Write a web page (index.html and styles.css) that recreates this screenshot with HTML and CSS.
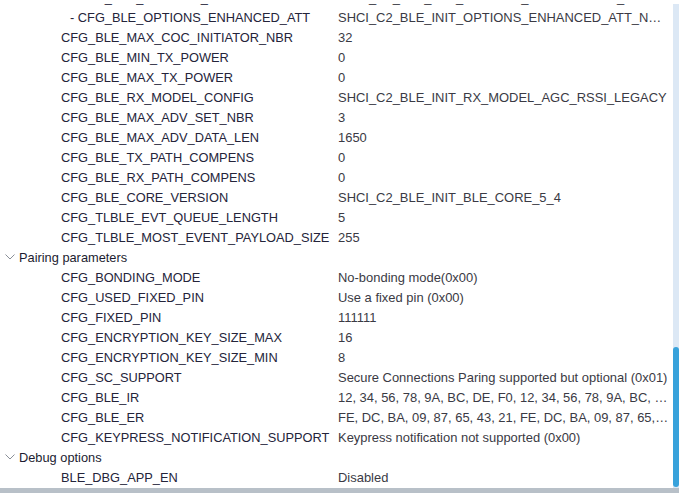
FILE: index.html
```html
<!DOCTYPE html>
<html>
<head>
<meta charset="utf-8">
<link rel="stylesheet" href="styles.css">
</head>
<body>
<div class="page">
  <div class="main">
    <div class="tree">
      <div class="list">
        <div class="row partial"><div class="label sub">- CFG_BLE_OPTIONS_APPEARANCE</div><div class="value">SHCI_C2_BLE_INIT_OPTIONS_APPEARANCE_READONLY</div></div>
        <div class="row"><div class="label sub">- CFG_BLE_OPTIONS_ENHANCED_ATT</div><div class="value">SHCI_C2_BLE_INIT_OPTIONS_ENHANCED_ATT_NOTSUPPORTED</div></div>
        <div class="row"><div class="label">CFG_BLE_MAX_COC_INITIATOR_NBR</div><div class="value">32</div></div>
        <div class="row"><div class="label">CFG_BLE_MIN_TX_POWER</div><div class="value">0</div></div>
        <div class="row"><div class="label">CFG_BLE_MAX_TX_POWER</div><div class="value">0</div></div>
        <div class="row"><div class="label">CFG_BLE_RX_MODEL_CONFIG</div><div class="value">SHCI_C2_BLE_INIT_RX_MODEL_AGC_RSSI_LEGACY</div></div>
        <div class="row"><div class="label">CFG_BLE_MAX_ADV_SET_NBR</div><div class="value">3</div></div>
        <div class="row"><div class="label">CFG_BLE_MAX_ADV_DATA_LEN</div><div class="value">1650</div></div>
        <div class="row"><div class="label">CFG_BLE_TX_PATH_COMPENS</div><div class="value">0</div></div>
        <div class="row"><div class="label">CFG_BLE_RX_PATH_COMPENS</div><div class="value">0</div></div>
        <div class="row"><div class="label">CFG_BLE_CORE_VERSION</div><div class="value">SHCI_C2_BLE_INIT_BLE_CORE_5_4</div></div>
        <div class="row"><div class="label">CFG_TLBLE_EVT_QUEUE_LENGTH</div><div class="value">5</div></div>
        <div class="row"><div class="label">CFG_TLBLE_MOST_EVENT_PAYLOAD_SIZE</div><div class="value">255</div></div>
        <div class="row group"><svg class="chev" width="10" height="6" viewBox="0 0 10 6"><polyline points="0.5,0.5 5,5 9.5,0.5" fill="none" stroke="#8a8f98" stroke-width="1"/></svg><span class="gtext">Pairing parameters</span></div>
        <div class="row"><div class="label">CFG_BONDING_MODE</div><div class="value">No-bonding mode(0x00)</div></div>
        <div class="row"><div class="label">CFG_USED_FIXED_PIN</div><div class="value">Use a fixed pin (0x00)</div></div>
        <div class="row"><div class="label">CFG_FIXED_PIN</div><div class="value">111111</div></div>
        <div class="row"><div class="label">CFG_ENCRYPTION_KEY_SIZE_MAX</div><div class="value">16</div></div>
        <div class="row"><div class="label">CFG_ENCRYPTION_KEY_SIZE_MIN</div><div class="value">8</div></div>
        <div class="row"><div class="label">CFG_SC_SUPPORT</div><div class="value">Secure Connections Paring supported but optional (0x01)</div></div>
        <div class="row"><div class="label">CFG_BLE_IR</div><div class="value">12, 34, 56, 78, 9A, BC, DE, F0, 12, 34, 56, 78, 9A, BC, DE, F0</div></div>
        <div class="row"><div class="label">CFG_BLE_ER</div><div class="value">FE, DC, BA, 09, 87, 65, 43, 21, FE, DC, BA, 09, 87, 65, 43, 21</div></div>
        <div class="row"><div class="label">CFG_KEYPRESS_NOTIFICATION_SUPPORT</div><div class="value">Keypress notification not supported (0x00)</div></div>
        <div class="row group"><svg class="chev" width="10" height="6" viewBox="0 0 10 6"><polyline points="0.5,0.5 5,5 9.5,0.5" fill="none" stroke="#8a8f98" stroke-width="1"/></svg><span class="gtext">Debug options</span></div>
        <div class="row"><div class="label">BLE_DBG_APP_EN</div><div class="value">Disabled</div></div>
      </div>
    </div>
    <div class="scrollbar"><div class="thumb"></div></div>
  </div>
  <div class="footer"></div>
</div>
</body>
</html>
```

FILE: styles.css
```css
html, body {
  margin: 0;
  padding: 0;
  background: #ffffff;
}
body {
  font-family: "Liberation Sans", Arial, sans-serif;
  font-size: 12.8px;
  color: #262633;
}
.page {
  width: 679px;
  height: 493px;
  display: flex;
  flex-direction: column;
  overflow: hidden;
}
.main {
  height: 488px;
  display: flex;
  flex-direction: row;
}
.tree {
  flex: 1;
  overflow: hidden;
}
.list {
  margin-top: -13px;
}
.row {
  height: 20px;
  display: flex;
  align-items: center;
  white-space: nowrap;
}
.row.partial {
  clip-path: inset(15px 0 0 0);
}
.label {
  width: 338px;
  flex: none;
  box-sizing: border-box;
  padding-left: 61px;
  overflow: hidden;
  color: #24243a;
}
.label.sub {
  padding-left: 70px;
}
.value {
  width: 333px;
  flex: none;
  overflow: hidden;
  text-overflow: ellipsis;
  font-size: 12.95px;
  color: #3a3a44;
}
.group .chev {
  margin-left: 5px;
  margin-right: 4px;
  flex: none;
}
.gtext {
  color: #1c1c30;
}
.scrollbar {
  width: 6px;
  flex: none;
  margin-top: 4px;
  background: #dce8f5;
  display: flex;
  flex-direction: column;
}
.thumb {
  margin-top: 343px;
  height: 140px;
  background: #38a2db;
  border-radius: 3px;
}
.footer {
  height: 5px;
  background: #b8c0c8;
}
```
